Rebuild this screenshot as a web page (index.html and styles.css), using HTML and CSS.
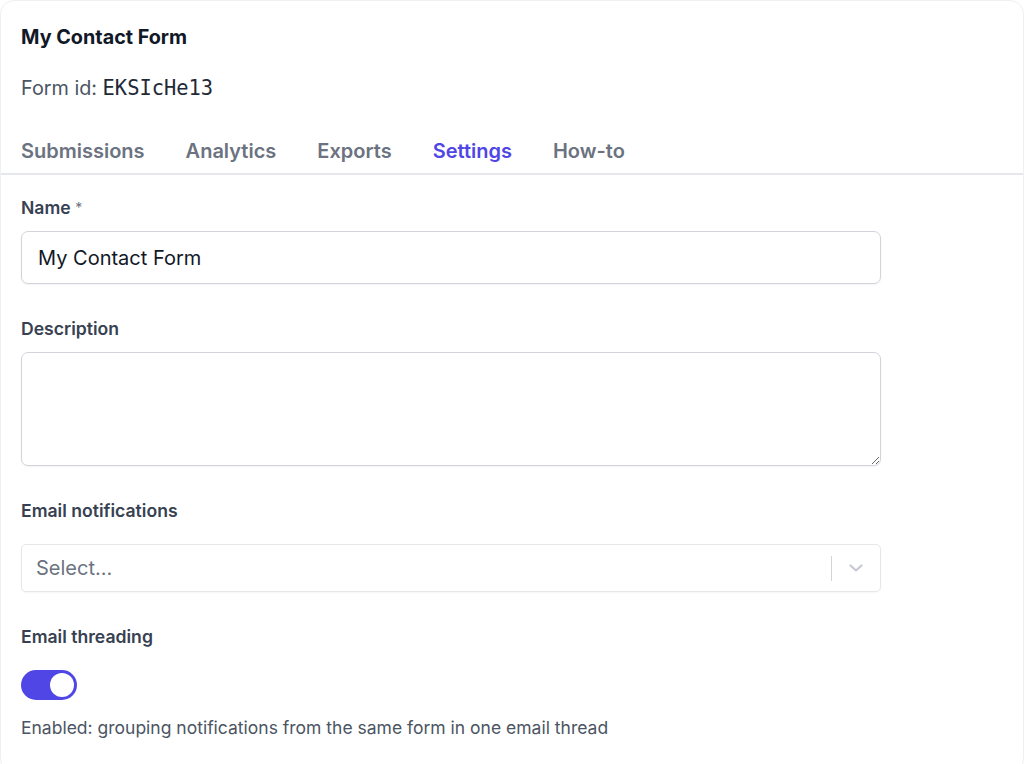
FILE: index.html
```html
<!DOCTYPE html>
<html lang="en">
  <head>
    <meta charset="UTF-8" />
    <meta name="viewport" content="width=device-width, initial-scale=1.0" />
    <title>My Contact Form - Settings</title>
    <link rel="stylesheet" href="styles.css">
  </head>
  <body>
    <div class="panel">
      <div class="header">
        <h1 class="title">My Contact Form</h1>
        <p class="form-id">Form id: <code>EKSIcHe13</code></p>
        <nav class="tabs">
          <a class="tab">Submissions</a>
          <a class="tab">Analytics</a>
          <a class="tab">Exports</a>
          <a class="tab active">Settings</a>
          <a class="tab">How-to</a>
        </nav>
      </div>

      <form class="settings">
        <div class="field">
          <label class="label" for="name">Name <span class="req">*</span></label>
          <input class="input" id="name" type="text" value="My Contact Form" />
        </div>

        <div class="field">
          <label class="label" for="desc">Description</label>
          <textarea class="input textarea" id="desc"></textarea>
        </div>

        <div class="field">
          <label class="label">Email notifications</label>
          <div class="select">
            <span class="placeholder">Select...</span>
            <span class="sep"></span>
            <svg class="chevron" width="20" height="20" viewBox="0 0 20 20">
              <path d="M4.5 7.5 L10 12.5 L15.5 7.5" fill="none" stroke="currentColor" stroke-width="2.2" stroke-linecap="round" stroke-linejoin="round" />
            </svg>
          </div>
        </div>

        <div class="field">
          <label class="label">Email threading</label>
          <button type="button" class="toggle on"><span class="knob"></span></button>
          <p class="hint">Enabled: grouping notifications from the same form in one email thread</p>
        </div>
      </form>
    </div>
  </body>
</html>
```

FILE: styles.css
```css
body {
  margin: 0;
  background: #fff;
  font-family: Inter, "Noto Sans", sans-serif;
  color: #111827;
}
.panel {
  min-height: 764px;
  box-sizing: border-box;
  border: 1px solid #eef0f3;
  border-radius: 14px;
}
.header {
  padding: 24px 20px 0;
  border-bottom: 2px solid #e5e7eb;
}
.title {
  margin: 0;
  font-size: 19.8px;
  font-weight: 700;
  line-height: 24px;
}
.form-id {
  margin: 27px 0 0;
  font-size: 19.8px;
  line-height: 24px;
  color: #4b5563;
}
.form-id code {
  font-family: "DejaVu Sans Mono", monospace;
  font-size: 20.4px;
  color: #1f2937;
}
.tabs {
  display: flex;
  gap: 41px;
  margin-top: 38px;
  padding-bottom: 9px;
}
.tab {
  font-size: 20px;
  font-weight: 600;
  line-height: 26px;
  color: #6b7280;
}
.tab.active {
  color: #4f46e5;
}
.settings {
  padding: 22px 20px 0;
  width: 860px;
}
.field {
  margin-bottom: 34px;
}
.label {
  display: block;
  font-size: 17.6px;
  font-weight: 600;
  line-height: 22px;
  color: #374151;
  margin-bottom: 12px;
}
.req {
  color: #6b7280;
  font-size: 14px;
  font-weight: 400;
  vertical-align: top;
}
.input {
  display: block;
  box-sizing: border-box;
  width: 100%;
  height: 53px;
  padding: 0 16px;
  border: 1px solid #d1d5db;
  border-radius: 7px;
  font-family: inherit;
  font-size: 20px;
  color: #111827;
  box-shadow: 0 1px 2px rgba(0, 0, 0, 0.05);
}
.textarea {
  height: 114px;
  resize: vertical;
}
.select {
  display: flex;
  align-items: center;
  box-sizing: border-box;
  height: 48px;
  padding: 0 14px;
  border: 1px solid #e5e7eb;
  border-radius: 5px;
  box-shadow: 0 1px 2px rgba(0, 0, 0, 0.04);
  margin-top: 22px;
}
.placeholder {
  flex: 1;
  font-size: 20px;
  color: #6b7280;
}
.sep {
  width: 1px;
  height: 25px;
  background: #d1d5db;
  margin-right: 14px;
}
.chevron {
  color: #c7cad0;
}
.toggle {
  display: block;
  width: 56px;
  height: 30px;
  padding: 3px;
  margin-top: 22px;
  border: 0;
  border-radius: 15px;
  background: #4f46e5;
  cursor: pointer;
}
.knob {
  display: block;
  width: 24px;
  height: 24px;
  border-radius: 50%;
  background: #fff;
  margin-left: 26px;
}
.hint {
  margin: 17px 0 0;
  font-size: 17.5px;
  color: #4b5563;
}
```
